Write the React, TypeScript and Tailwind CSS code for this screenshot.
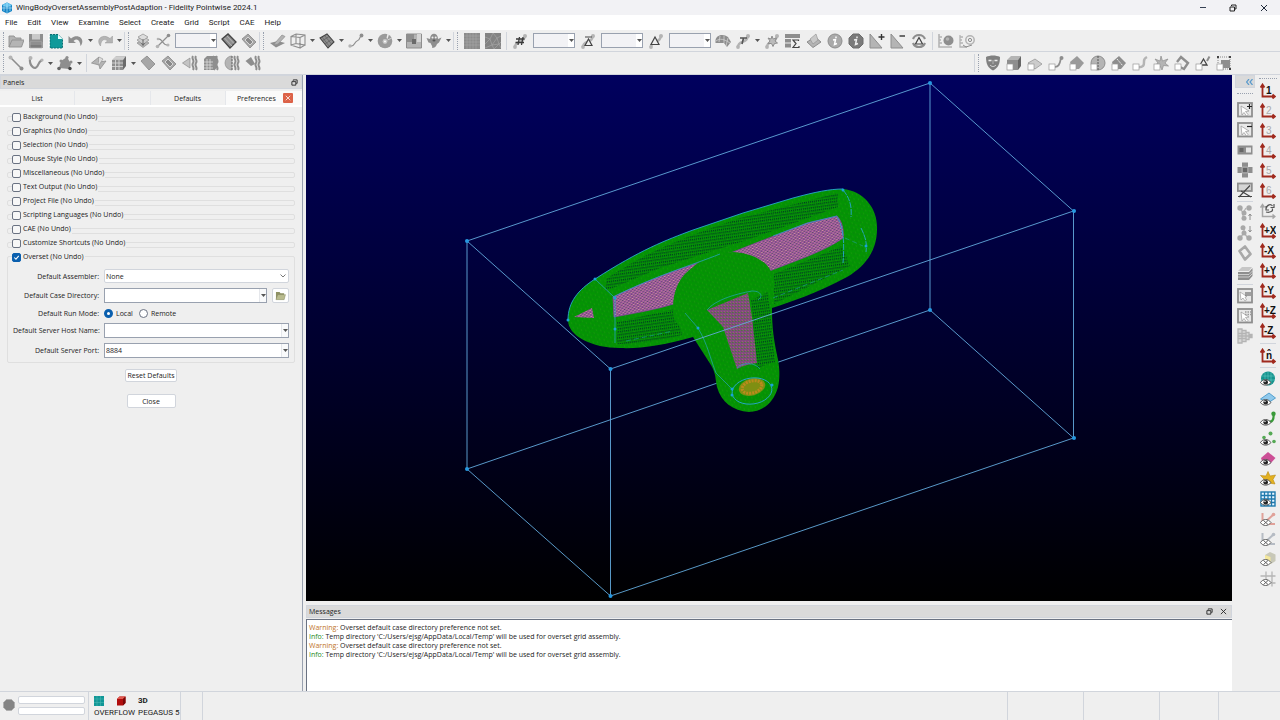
import React from 'react';

type IconName = string;

const G1 = '#8e8e8e';
const G2 = '#b4b4b4';
const G3 = '#6a6a6a';

const tag = <rect x="1" y="9" width="6" height="6" fill="#fff" stroke="#999" strokeWidth="0.7" />;

const curve = (
  <>
    <path d="M3 14C3 7 12 11 13 3" fill="none" stroke={G2} strokeWidth="2.4" />
    <circle cx="3" cy="14" r="1.9" fill={G2} />
    <circle cx="13" cy="3" r="2" fill={G2} />
  </>
);

const diamond = (
  <path d="M1 6L7 1L15 9L9 15Z" fill="#a6a6a6" stroke={G1} strokeWidth="0.9" />
);

const waves = (
  <path d="M11 1C9 4 13 5 11 8C9 11 13 12 11 15M14 1C12 4 16 5 14 8C12 11 16 12 14 15" fill="none" stroke={G1} strokeWidth="2" />
);

const axes = (
  <path d="M2.500 2.500V13.500H14M0.500 4.500L2.500 1.500L4.500 4.500M12.500 11.500L14.800 13.500L12.500 15.500" fill="none" stroke="#a02a1e" strokeWidth="1.8" />
);

const eye = (
  <>
    <path d="M0.500 11.500C3 7.500 8 7.500 11 11.500C8 15 3 15 0.500 11.500Z" fill="#fff" stroke="#444" strokeWidth="0.9" />
    <circle cx="5.700" cy="11.300" r="2.300" fill="#222" />
    <circle cx="5" cy="10.500" r="0.700" fill="#fff" />
  </>
);

const hiddenEye = (
  <>
    <path d="M0.500 11.500C3 7.500 8 7.500 11 11.500C8 15.500 3 15.500 0.500 11.500Z" fill="#fff" stroke="#555" strokeWidth="0.9" />
    <path d="M3.500 9.500L8 13.500M8 9.500L3.500 13.500" stroke="#555" strokeWidth="0.9" />
  </>
);

const screen = <rect x="1" y="1" width="14" height="13.500" fill="#e8e8e8" stroke={G1} strokeWidth="1.8" />;
const pointer = <path d="M4 4L5 13L7 10.500L9.500 14L11 12.500L8.500 9.500L12 9Z" fill="#fff" stroke="#888" strokeWidth="0.6" />;

const icons: Record<IconName, React.ReactNode> = {
  open: (
    <path d="M1 14V3H6L7.500 5H13V7H16L13.500 14ZM1 14L4 7H13" fill={G2} stroke={G1} strokeWidth="0.9" />
  ),
  save: (
    <>
      <path d="M1 1H15V15H1Z" fill={G1} />
      <rect x="4" y="1" width="8" height="5.500" fill="#c9c9c9" />
      <path d="M2 9H14V15H2ZM2 11H14" fill={G3} fillOpacity="0.5" stroke="#b5b5b5" strokeWidth="0.7" />
    </>
  ),
  importGrid: (
    <>
      <path d="M2 1.500H10L14.500 6V15H2Z" fill="#109a9a" stroke="#0b6f73" strokeDasharray="2 1" />
      <path d="M10 1.500V6H14.500Z" fill="#e8ffff" />
      <path d="M1 0V15" stroke="#fff" />
    </>
  ),
  undo: <path d="M0.500 3V10H8L5.500 8C9 5 12 7 12.500 13C18 6 10 0 3 5.500Z" fill={G1} />,
  redo: <path d="M15.500 3V10H8L10.500 8C7 5 4 7 3.500 13C-2 6 6 0 13 5.500Z" fill={G2} stroke={G1} strokeWidth="0.4" />,
  layers: (
    <>
      <path d="M2 10L8 6L14 10L8 14.500Z" fill={G2} stroke={G1} strokeWidth="0.7" />
      <path d="M2 7L8 3L14 7L8 11.500Z" fill="#ccc" stroke={G1} strokeWidth="0.7" />
      <path d="M3 4L8 1L13 4L8 7.500Z" fill="#ddd" stroke={G1} strokeWidth="0.7" />
      <path d="M8 6V12M6.500 10L8 12.500L9.500 10" stroke={G3} fill="none" />
    </>
  ),
  spline: (
    <>
      <path d="M2 14L14 2M3 6C8 5 7 13 13 12" fill="none" stroke={G1} strokeWidth="1.2" />
      <circle cx="2.500" cy="13.500" r="1.800" fill={G2} />
      <circle cx="13.500" cy="2.500" r="1.800" fill={G1} />
      <circle cx="13" cy="12" r="1.500" fill={G2} />
      <circle cx="3" cy="6" r="1.300" fill={G2} />
    </>
  ),
  domain: (
    <>
      <path d="M1 6L7 1L15 9L9 15Z" fill={G1} stroke="#444" strokeWidth="1.300" />
      <path d="M3.500 5L11 13M6 3L13 10.500" stroke={G2} />
    </>
  ),
  domainLight: diamond,
  domainPair: (
    <>
      {diamond}
      <path d="M7 4L12 9L9 12L4 7Z" fill="#8a8a8a" stroke="#ddd" strokeWidth="0.9" />
    </>
  ),
  pencil: (
    <>
      <path d="M0 10L8 8L15 10L6 14.500Z" fill={G1} />
      <path d="M5 10L12 2L15 3.500L8 11L4.500 12Z" fill={G2} stroke={G1} strokeWidth="0.7" />
    </>
  ),
  wireCube: (
    <path d="M1 3.500L10 4.500V15L1 12ZM6 1L15 2V12L6 10.500ZM1 3.500L6 1M10 4.500L15 2M10 15L15 12M1 12L6 10.500" fill="none" stroke={G1} strokeWidth="1.100" />
  ),
  mesh: (
    <>
      <path d="M1 5L8 1L15 9L9 15Z" fill={G1} stroke="#444" strokeWidth="1.100" />
      <path d="M3 4L10.500 13.500M5.500 2.500L12.500 11M3 8L10 3.500M6 11L12.500 6.500" stroke="#555" strokeWidth="0.600" />
    </>
  ),
  connector: (
    <>
      <path d="M2 13C7 14 6 9 9 8C13 7 11 3 14 2" fill="none" stroke={G1} strokeWidth="1.200" />
      <circle cx="2" cy="13" r="1.700" fill={G2} />
      <circle cx="13.500" cy="2.500" r="1.900" fill={G1} />
    </>
  ),
  disc: (
    <>
      <circle cx="8" cy="8" r="7.300" fill="#9b9b9b" />
      <path d="M9.500 5L10.500 0.500L12 1.500L10.500 6Z" fill="#efefef" />
      <path d="M10.500 7L15 5" stroke="#d5d5d5" />
      <circle cx="8" cy="8.500" r="2.400" fill="#c8c8c8" />
      <circle cx="8" cy="8.500" r="0.900" fill="#fff" />
    </>
  ),
  blocks: (
    <>
      <path d="M0.500 1H15.500V15H0.500Z" fill={G2} stroke={G1} />
      <path d="M1 1H8V9H1Z" fill={G1} />
      <path d="M6 6H10V11H6Z" fill={G3} />
      <path d="M11 1H15V9H11Z" fill="#d5d5d5" />
    </>
  ),
  ghost: (
    <>
      <path d="M4 6C4 -1 12 -1 12 6L15.500 4.500L13 9.500L11 11C10 14 8 15 6 15C7 13 5 12 4.500 10L2.500 9.500L0.500 5Z" fill={G1} />
      <circle cx="6.500" cy="4.500" r="1" fill="#eee" />
      <circle cx="9.700" cy="4.500" r="1" fill="#eee" />
      <ellipse cx="8" cy="7.500" rx="1.500" ry="1" fill="#555" />
    </>
  ),
  gridStruct: (
    <>
      <rect x="0" y="0" width="16" height="16" fill="#8c8c8c" />
      <path d="M0 3H16M0 6H16M0 9H16M0 12H16M3 0V16M6 0V16M9 0V16M12 0V16" stroke="#a9a9a9" strokeWidth="0.600" />
    </>
  ),
  gridTri: (
    <>
      <rect x="0" y="0" width="16" height="16" fill="#838383" />
      <path d="M0 4L5 6L8 0L12 5L16 3M0 11L5 6L7 12L12 5L14 11L16 9M0 15L7 12L9 16L14 11L16 15M7 12L14 11" fill="none" stroke="#a5a5a5" strokeWidth="0.700" />
    </>
  ),
  dimension: (
    <>
      {curve}
      <path d="M4 6H12.500M3.500 9.500H12M7.500 4L6 12M11 4L9.500 12" stroke="#3a3a3a" strokeWidth="1.300" />
    </>
  ),
  spacingAvg: (
    <>
      {curve}
      <path d="M5 4H12M8.500 6L12 12.500H5Z" fill="#eee" stroke="#444" strokeWidth="1.200" />
    </>
  ),
  spacing: (
    <>
      {curve}
      <path d="M7 4L11 11.500H3Z" fill="#eee" stroke="#444" strokeWidth="1.200" />
    </>
  ),
  shell: (
    <>
      <path d="M0.500 7C2 1 9 1 13 4L16 9L12 14L9 10L0.500 10Z" fill={G1} />
      <path d="M1 8C5 5 9 6 15 10M5 3L4 9M9 3L9 10M13 5L11 13" fill="none" stroke="#d0d0d0" strokeWidth="0.800" />
    </>
  ),
  distribute: (
    <>
      {curve}
      <path d="M5 5H12M8.500 5L7 11" stroke="#555" strokeWidth="1.600" />
    </>
  ),
  sparkCurve: (
    <>
      {curve}
      <path d="M8 3L9.200 6L12.500 5L11 8L13.500 10L10.500 10.500L9 13.500L7.500 10.500L4 10.500L6 8L4 5L7 6Z" fill="#bbb" stroke={G1} />
    </>
  ),
  sumTable: (
    <>
      <path d="M0 1H15V5H0ZM0 6H6V9.500H0ZM0 10.500H6V14.500H0Z" fill={G1} />
      <path d="M13.500 8V7H8L11 10.500L8 14.500H14V13" fill="none" stroke="#444" strokeWidth="1.200" />
    </>
  ),
  sheets: (
    <>
      <path d="M1 9L9 4L15 9L7 14.500Z" fill={G2} stroke={G1} />
      <path d="M4 6L10 1L12 7L7 11Z" fill="#c9c9c9" stroke={G1} strokeWidth="0.600" />
    </>
  ),
  infoLight: (
    <>
      <circle cx="8" cy="8" r="7" fill="#aaa" stroke={G1} />
      <path d="M6 7L8.500 6.500L7.500 11.500L10 10.500M9 3.500V5" fill="none" stroke="#fff" strokeWidth="1.500" />
    </>
  ),
  infoDark: (
    <>
      <path d="M5 1H11L15 5V11L11 15H5L1 11V5Z" fill="#7a7a7a" stroke="#6d6d6d" />
      <path d="M6 7L8.500 6.500L7.500 11.500L10 10.500M9 3.500V5" fill="none" stroke="#eee" strokeWidth="1.500" />
    </>
  ),
  trianglePlus: (
    <>
      <path d="M1 1L13 15H1Z" fill={G2} stroke={G1} />
      <path d="M9.500 4H15.500M12.500 1V7" stroke="#333" strokeWidth="1.400" />
    </>
  ),
  triangleMinus: (
    <>
      <path d="M1 1L13 15H1Z" fill={G2} stroke={G1} />
      <path d="M9.500 3H15" stroke="#333" strokeWidth="1.400" />
    </>
  ),
  recalc: (
    <>
      <path d="M2 6A6.500 6.500 0 0 1 14 6M14 10A6.500 6.500 0 0 1 2 10" fill="none" stroke={G1} strokeWidth="2.200" />
      <path d="M8 4.500L11.500 11H4.500Z" fill="#eee" stroke="#444" strokeWidth="1.200" />
    </>
  ),
  rulerBall: (
    <>
      <path d="M1 1V14H14M1 4H4M1 7H3M1 10H4" fill="none" stroke={G2} strokeWidth="1.600" />
      <circle cx="10.500" cy="7.500" r="5" fill={G1} />
      <circle cx="9.500" cy="6" r="1.800" fill={G2} />
    </>
  ),
  rulerRoll: (
    <>
      <path d="M1 2V14H8M1 4H4M1 7H3M1 10H4" fill="none" stroke={G2} strokeWidth="1.300" />
      <circle cx="11" cy="7" r="4.200" fill="none" stroke={G2} strokeWidth="1.500" />
      <circle cx="11" cy="7" r="1.600" fill="none" stroke={G1} />
      <path d="M4 12L7 14L13 12" fill="none" stroke={G1} />
    </>
  ),
  line: (
    <>
      <path d="M2.500 2.500L14 14" stroke={G1} strokeWidth="1.600" />
      <circle cx="2.500" cy="2.500" r="2" fill={G2} />
      <circle cx="13.500" cy="13.500" r="2" fill={G1} />
    </>
  ),
  arc: (
    <>
      <path d="M2 3C1 12 8 16 10 10C11 7 12 6 14 5" fill="none" stroke={G1} strokeWidth="2.200" />
      <circle cx="2.500" cy="3" r="2" fill={G2} />
      <circle cx="14" cy="5" r="1.600" fill={G2} />
    </>
  ),
  polygon: (
    <>
      <path d="M2 13L4 6L10 2L14 9L12 14Z" fill={G1} />
      <circle cx="2" cy="13.500" r="1.800" fill="#666" />
      <circle cx="4" cy="6" r="1.500" fill={G1} />
      <circle cx="10" cy="2.500" r="1.600" fill={G1} />
      <circle cx="13" cy="13.500" r="1.700" fill="#444" />
      <circle cx="14" cy="7" r="1.500" fill={G1} />
    </>
  ),
  foldSheets: (
    <>
      <path d="M0.500 8L8 2V7L15 6L9 14L8 10Z" fill={G2} stroke={G1} strokeWidth="0.800" />
      <path d="M8 2L12 4L8 10" fill="#ddd" stroke={G1} strokeWidth="0.600" />
    </>
  ),
  gridCube: (
    <>
      <path d="M1 5L5 1H15L12 5Z" fill="#c4c4c4" />
      <path d="M12 5L15 1V11L12 15Z" fill={G3} />
      <path d="M1 5H12V15H1Z" fill={G1} />
      <path d="M1 8H12M1 11.500H12M4.500 5V15M8 5V15M3 3H13" stroke="#ddd" strokeWidth="0.800" />
    </>
  ),
  prism: (
    <>
      <path d="M0.500 8L8 3V13Z" fill="#c4c4c4" stroke={G1} strokeWidth="0.700" />
      {waves}
    </>
  ),
  gridWaves: (
    <>
      <path d="M1 4L4 1H14V13L11 15H1Z" fill={G1} />
      <path d="M1 7H10M1 10H10M1 13H10M4 4V15M7 4V15" stroke="#ddd" strokeWidth="0.800" />
      {waves}
    </>
  ),
  globeWaves: (
    <>
      <path d="M8 1A7 7 0 0 0 8 15Z" fill={G2} stroke={G1} strokeWidth="0.700" />
      <path d="M8 1V15" stroke={G3} strokeDasharray="2 1" />
      {waves}
    </>
  ),
  domainWaves: (
    <>
      <path d="M0.500 6L6 2L10 9L6 11Z" fill={G1} />
      {waves}
    </>
  ),
  mask: (
    <>
      <path d="M1 2C5 0 11 0 15 2C15 9 13 13 8 15.500C3 13 1 9 1 2Z" fill="#808080" />
      <path d="M3.500 5.500H6.500M9.500 5.500H12.500" stroke="#eee" strokeWidth="1.400" />
      <path d="M5 10C7 12 9 12 11 10" fill="none" stroke="#ddd" />
      <path d="M8 5V9" stroke={G2} />
    </>
  ),
  tCube: (
    <>
      <path d="M1 5L5 1H15L12 5Z" fill={G2} />
      <path d="M12 5L15 1V11L12 15Z" fill="#666" />
      <path d="M1 5H12V15H1Z" fill={G1} />
      {tag}
    </>
  ),
  tSheet: (
    <>
      <path d="M1 8L8 4L15 9L8 14Z" fill="#ccc" stroke={G1} strokeWidth="0.700" />
      {tag}
    </>
  ),
  tCurve: (
    <>
      <path d="M4 11C11 14 12 8 13 3" fill="none" stroke={G1} strokeWidth="1.800" />
      <circle cx="13.500" cy="3" r="2" fill={G1} />
      {tag}
    </>
  ),
  tDiamond: (
    <>
      <path d="M1 7L8 1L15 8L10 14H3Z" fill="#9a9a9a" />
      {tag}
    </>
  ),
  tGlobe: (
    <>
      <circle cx="8" cy="8" r="7" fill={G2} stroke={G1} />
      <path d="M8 1V15" stroke="#555" strokeDasharray="2 1" />
      {tag}
    </>
  ),
  tDomain: (
    <>
      <path d="M1 7L8 1L15 8L10 14H3Z" fill={G1} />
      <path d="M6 4L12 11" stroke="#eee" strokeDasharray="2 1" />
      {tag}
    </>
  ),
  tArc: (
    <>
      <path d="M4 12C13 13 12 9 12 6C12 4 13 3 15 2" fill="none" stroke={G2} strokeWidth="2.500" />
      {tag}
    </>
  ),
  tSpark: (
    <>
      <path d="M8 1L9.500 6L15 4L12 8L15.500 11L10.500 10.500L9 15L7 11L1 11L5 8L2 4L7 6Z" fill={G2} stroke={G1} strokeWidth="0.700" />
      {tag}
    </>
  ),
  tLoop: (
    <>
      <path d="M3 7L7 2L14 8L10 14L6 12" fill="none" stroke={G1} strokeWidth="2.400" />
      {tag}
    </>
  ),
  tSpacing: (
    <>
      <path d="M8.500 4L12 10H5Z" fill="none" stroke="#444" strokeWidth="1.300" />
      <path d="M12 6L14.500 1.500" stroke={G1} strokeWidth="2" />
      {tag}
    </>
  ),
  tSelect: (
    <>
      <path d="M2 2H14V14H2Z" fill="none" stroke="#888" strokeDasharray="1 1" />
      <path d="M1 1H3V3H1ZM13 1H15V3H13ZM13 13H15V15H13Z" fill="#444" />
      <rect x="5" y="5" width="9" height="8" fill={G1} />
      {tag}
    </>
  ),
  selPlus: (
    <>
      {screen}
      {pointer}
      <path d="M10 4.500H15M12.500 2V7" stroke="#222" strokeWidth="1.200" />
    </>
  ),
  selMinus: (
    <>
      {screen}
      {pointer}
      <path d="M10 4.500H15" stroke="#222" strokeWidth="1.200" />
    </>
  ),
  pair: (
    <>
      <rect x="0.500" y="3.500" width="15" height="9" fill={G1} />
      <rect x="2.500" y="6" width="4" height="4" fill="#666" />
      <rect x="9" y="5.500" width="5" height="5" fill="#e5e5e5" />
    </>
  ),
  cross: (
    <>
      <path d="M5 0.500H11V5H15.500V11H11V15.500H5V11H0.500V5H5Z" fill={G1} />
      <path d="M6 6H10V10H6Z" fill="#666" />
      <path d="M5 5H11V11H5Z" fill="none" stroke="#c0c0c0" strokeWidth="0.700" />
    </>
  ),
  cutAngle: (
    <>
      <rect x="0.800" y="1.500" width="14" height="7.500" fill="#d5d5d5" stroke={G1} strokeWidth="1.800" />
      <path d="M2 15L13 3.500M4 9L14 15M1 14.500H15" stroke="#444" strokeWidth="1.100" />
    </>
  ),
  treeUp: (
    <>
      <path d="M3 3L6 8L9 3M6 8V13" fill="none" stroke={G2} strokeWidth="1.300" />
      <g fill="#a8a8a8"><circle cx="3" cy="3" r="2.700" /><circle cx="12" cy="3" r="2.700" /><circle cx="7" cy="8" r="2.500" /><circle cx="7" cy="13.300" r="2.500" /></g>
      <path d="M13 15V9M11.500 11L13 9L14.500 11" fill="none" stroke={G1} />
    </>
  ),
  treeDown: (
    <>
      <path d="M7 3L7 8L3 13M7 8L11 13" fill="none" stroke={G2} strokeWidth="1.300" />
      <g fill="#a8a8a8"><circle cx="6" cy="2.700" r="2.500" /><circle cx="7" cy="8" r="2.500" /><circle cx="3" cy="13" r="2.700" /><circle cx="12" cy="13" r="2.700" /></g>
      <path d="M13 1V7M11.500 5L13 7L14.500 5" fill="none" stroke={G1} />
    </>
  ),
  loop: <path d="M2.500 6L8 1.500L13.500 9L8 14.500Z" fill="none" stroke="#a8a8a8" strokeWidth="2.600" strokeLinejoin="round" />,
  stack: (
    <>
      <path d="M1 6L5 2H15L12 6Z" fill="#c6c6c6" />
      <path d="M1 7H12V15H1ZM12 7L15.500 3V11L12 15Z" fill={G1} />
      <path d="M1 9.500H12L15.500 6M1 12H12L15.500 8.500" fill="none" stroke="#ddd" strokeWidth="0.800" />
    </>
  ),
  listA: (
    <>
      {screen}
      <path d="M3 4L4 12L6 10L8 13L9.500 12L8 9L10 8.500Z" fill="#fff" stroke={G1} strokeWidth="0.600" />
      <path d="M8 5H14M8 7H14" stroke="#555" strokeWidth="1" />
    </>
  ),
  listB: (
    <>
      {screen}
      {pointer}
      <path d="M8 4H15M8 6.500H15" stroke="#999" strokeWidth="1.500" strokeDasharray="1.500 1" />
    </>
  ),
  fan: (
    <path d="M1 1H5V15H1ZM5 2.500H9V13.500H5M9 4.500H12V11.500H9M12 6.500H15V9.500H12M1 5.500H9M1 8H15M1 10.500H9" fill="#d8d8d8" stroke={G2} strokeWidth="1.300" />
  ),
  reset: (
    <>
      <path d="M2.500 2V13.500H14M0.500 4.500L2.500 1.500L4.500 4.500M12.500 11.500L14.800 13.500L12.500 15.500" fill="none" stroke="#a5a5a5" strokeWidth="1.500" />
      <path d="M6 6C7 1 11 1 12.500 3M6 9C10 10 14 8 12 5.500M10.500 4.500H14V1M6 3V7H9" fill="none" stroke="#555" strokeWidth="1.200" />
    </>
  ),
  showBlocks: (
    <>
      <circle cx="8" cy="7.500" r="7" fill="#16948e" />
      <path d="M1.500 5H14.500M1 9H15M5 1.500V13M8 0.500V14M11 1.500V13" stroke="#6fd0c8" strokeWidth="0.500" />
      {eye}
    </>
  ),
  showDomains: (
    <>
      <path d="M0.500 8L9 2L15.500 7L8 12Z" fill="#8fc9ec" stroke="#4a9aca" strokeWidth="0.900" />
      {eye}
    </>
  ),
  showConnectors: (
    <>
      <path d="M6 11C13 12 14 8 13.500 3" fill="none" stroke="#3a9a3a" strokeWidth="2.200" />
      <circle cx="13.500" cy="2.800" r="2.200" fill="#3a9a3a" />
      {eye}
    </>
  ),
  showPoints: (
    <>
      <g fill="#55a955"><circle cx="10.500" cy="2.500" r="2" /><circle cx="4" cy="6.500" r="1.800" /><circle cx="14" cy="10.500" r="1.800" /></g>
      {eye}
    </>
  ),
  showDatabase: (
    <>
      <path d="M1 7L8 1L15.500 7L10 13H3Z" fill="#cc4f96" />
      {eye}
    </>
  ),
  showSources: (
    <>
      <path d="M8 0.500L10 5L15.500 4L13 8.500L15 13L9 12L2 12L4 8L0.500 4.500L6 5Z" fill="#e3b120" stroke="#b98a12" strokeWidth="0.600" />
      {eye}
    </>
  ),
  showGrid: (
    <>
      <rect x="1" y="1" width="14" height="14" fill="#e8f5ff" stroke="#1f79ad" strokeWidth="1.400" />
      <path d="M1 4.500H15M1 8H15M1 11.500H15M4.500 1V15M8 1V15M11.500 1V15" stroke="#1f79ad" strokeWidth="1.300" />
      {eye}
    </>
  ),
  hideAxesRed: (
    <>
      <path d="M2.500 13V2M4 12L13 4M4 13H15" fill="none" stroke="#e0a29a" strokeWidth="2" />
      <circle cx="13.500" cy="3.500" r="1.800" fill="#e0a29a" />
      {hiddenEye}
    </>
  ),
  hideAxes: (
    <>
      <path d="M2.500 13V2M4 12L13 4M4 13H15" fill="none" stroke="#b6bcc4" strokeWidth="2" />
      <circle cx="13.500" cy="3.500" r="1.800" fill="#b6bcc4" />
      {hiddenEye}
    </>
  ),
  hideCube: (
    <>
      <path d="M5 4L10 1L15.500 3.500V10L11 13L5 10Z" fill="#c8c8b8" />
      <path d="M5 4L10.500 6V13L5 10Z" fill="#f3e79c" />
      {hiddenEye}
    </>
  ),
  hideGrid: (
    <>
      <path d="M0.500 5H15.500M5 12H15.500M6 0.500V9M12 0.500V15.500" stroke="#b5b5b5" strokeWidth="1.300" />
      {hiddenEye}
    </>
  ),
};

const Icon: React.FC<{ name: IconName; className?: string }> = ({ name, className = 'h-4 w-4' }) => (
  <svg viewBox="0 0 16 16" className={className} aria-hidden="true">
    {icons[name]}
  </svg>
);

const ToolButton: React.FC<{ name: IconName }> = ({ name }) => (
  <button type="button" aria-label={name} className="flex h-5 w-5 shrink-0 items-center justify-center">
    <Icon name={name} />
  </button>
);

const MenuArrow = () => (
  <button type="button" aria-label="More" className="flex h-3 w-[9px] shrink-0 items-center justify-center">
    <svg viewBox="0 0 5 3" className="h-[3px] w-[5px]"><path d="M0 0H5L2.500 3Z" fill="#555" /></svg>
  </button>
);

const Handle = () => (
  <div className="flex w-[9px] shrink-0 items-center border-l border-gray-300 pl-[3px]">
    <div className="h-[18px] border-l border-dotted border-gray-400" />
  </div>
);

const Separator = () => <div className="mx-0.5 h-[18px] w-px shrink-0 bg-gray-300" />;

const SmallCombo: React.FC<{ label: string }> = ({ label }) => (
  <div className="mx-0.5 flex h-[15px] w-[42px] shrink-0 items-center border border-gray-400 bg-[#f2f2f5]">
    <input aria-label={label} className="h-full min-w-0 flex-1 bg-transparent text-[7px] outline-none" />
    <div className="flex h-full w-[6px] items-center justify-center bg-white"><MenuArrow /></div>
  </div>
);

// '|' is a group handle, '/' a separator, 'v' a drop-down arrow and '[]' a value box
const fileTools = [
  'open', 'save', 'importGrid', 'undo', 'v', 'redo', 'v', '|',
  'layers', 'spline', '[]', 'domain', 'domainPair', '|',
  'pencil', 'wireCube', 'v', 'mesh', 'v', 'connector', 'v', 'disc', 'v', 'blocks', 'ghost', 'v', '|',
];
const gridTools = ['gridStruct', 'gridTri', '/', 'dimension', '[]', 'spacingAvg', '[]', 'spacing', '[]'];
const shapeTools = ['shell', 'distribute', 'v'];
const examineTools = [
  'sparkCurve', 'sumTable', 'sheets', 'infoLight', 'infoDark',
  'trianglePlus', 'triangleMinus', 'recalc', '/', 'rulerBall', 'rulerRoll',
];

const createTools = [
  'line', 'arc', 'v', 'polygon', 'v', '/', 'foldSheets', 'gridCube', 'v',
];
const solveTools = ['domainLight', 'domainPair', 'prism', 'gridWaves', 'globeWaves', 'domainWaves'];

const maskTools = [
  'mask', 'tCube', 'tSheet', 'tCurve', 'tDiamond', 'tGlobe', 'tDomain', 'tArc', 'tSpark', 'tLoop', 'tSpacing', 'tSelect',
];

const Tools: React.FC<{ items: string[]; spaced?: boolean }> = ({ items, spaced }) => (
  <div className={`flex items-center ${spaced ? 'gap-px' : ''}`}>
    {items.map((item, i) => {
      if (item === '|') return <Handle key={i} />;
      if (item === '/') return <Separator key={i} />;
      if (item === 'v') return <MenuArrow key={i} />;
      if (item === '[]') return <SmallCombo key={i} label={`Value ${i}`} />;
      return <ToolButton key={i} name={item} />;
    })}
  </div>
);

const menus = ['File', 'Edit', 'View', 'Examine', 'Select', 'Create', 'Grid', 'Script', 'CAE', 'Help'];

const RestoreIcon = ({ className = 'h-2 w-2' }: { className?: string }) => (
  <svg viewBox="0 0 8 8" className={className}>
    <path d="M2.500 2V1H7V5H6M1 3H5.500V7H1Z" fill="none" stroke="#222" strokeWidth="1" />
  </svg>
);

const CloseIcon = ({ className = 'h-2 w-2' }: { className?: string }) => (
  <svg viewBox="0 0 8 8" className={className}>
    <path d="M1 1L7 7M7 1L1 7" stroke="currentColor" strokeWidth="1" />
  </svg>
);

const TitleBar = () => (
  <header className="flex h-[15px] items-center bg-[#f2f2f5] pl-px">
    <svg viewBox="0 0 12 12" className="h-3 w-3">
      <path d="M6 0.500L11 3V9L6 11.500L1 9V3Z" fill="#1583c5" />
      <path d="M6 0.500L11 3L6 5.500L1 3Z" fill="#66c4ef" />
      <path d="M3 3V9M6 1V11M9 3V9M1 6L11 6" stroke="#c5ecff" strokeWidth="0.600" />
    </svg>
    <h1 className="pl-[3px] font-[Roboto,sans-serif] text-[8px] text-[#222]">WingBodyOversetAssemblyPostAdaption - Fidelity Pointwise 2024.1</h1>
    <div className="ml-auto flex items-center text-gray-800">
      <button type="button" aria-label="Minimize" className="flex w-[30px] justify-center"><span className="h-px w-[6px] bg-gray-700" /></button>
      <button type="button" aria-label="Restore" className="flex w-[30px] justify-center"><RestoreIcon /></button>
      <button type="button" aria-label="Close" className="flex w-[32px] justify-center"><CloseIcon /></button>
    </div>
  </header>
);

const groups = [
  'Background', 'Graphics', 'Selection', 'Mouse Style', 'Miscellaneous',
  'Text Output', 'Project File', 'Scripting Languages', 'CAE', 'Customize Shortcuts',
];

const Check: React.FC<{ label: string; checked?: boolean }> = ({ label, checked }) => (
  <label className="flex items-center gap-0.5 bg-[#efefef] pr-px leading-[14px]">
    <span className="relative flex h-[9px] w-[9px]">
      <input
        type="checkbox"
        defaultChecked={checked}
        className="h-[9px] w-[9px] appearance-none rounded-[2px] border border-gray-500 bg-[#f7f7f7] checked:border-[#0a5fae] checked:bg-[#0a5fae]"
      />
      {checked && (
        <svg viewBox="0 0 8 8" className="pointer-events-none absolute inset-0 h-[9px] w-[9px]">
          <path d="M2 4L3.500 5.500L6 2.500" fill="none" stroke="#fff" strokeWidth="0.900" />
        </svg>
      )}
    </span>
    {label} (No Undo)
  </label>
);

const ComboField: React.FC<{ id: string; value?: string }> = ({ id, value = '' }) => (
  <div className="flex h-[15px] min-w-0 flex-1 items-center border border-gray-400 bg-white">
    <input id={id} defaultValue={value} className="h-full min-w-0 flex-1 bg-transparent px-px outline-none" />
    <div className="flex h-full w-[7px] items-center justify-center border-l border-gray-200 bg-gray-50"><MenuArrow /></div>
  </div>
);

const FormRow: React.FC<{ label: string; id: string; children: React.ReactNode }> = ({ label, id, children }) => (
  <div className="flex items-center">
    <label htmlFor={id} className="w-[91px] shrink-0 pr-[5px] text-right whitespace-nowrap">{label}</label>
    {children}
  </div>
);

const PanelsDock = () => (
  <aside className="flex w-[303px] shrink-0 flex-col border-r border-gray-400 bg-[#efefef] text-[7px] text-[#222]">
    <div className="flex h-[14px] items-center justify-between border border-gray-300 bg-[#dadada] pr-[3px] pl-0.5">
      <h2>Panels</h2>
      <button type="button" aria-label="Float panels"><RestoreIcon className="h-[7px] w-[7px]" /></button>
    </div>
    <div role="tablist" className="flex h-[18px] items-stretch border-b-2 border-white pt-0.5">
      {['List', 'Layers', 'Defaults'].map((tab) => (
        <button key={tab} type="button" role="tab" className="flex-1 border-r border-gray-200 bg-[#f2f2f2]">{tab}</button>
      ))}
      <div className="flex flex-1 items-center justify-center gap-[7px] bg-[#fafafa] pl-0.5">
        <button type="button" role="tab" aria-selected="true">Preferences</button>
        <button type="button" aria-label="Close tab" className="flex h-[10px] w-[10px] items-center justify-center rounded-[1px] bg-[#dc6248] text-white">
          <CloseIcon className="h-[6px] w-[6px]" />
        </button>
      </div>
    </div>
    <form className="px-[7px] pt-[3px]" onSubmit={(e) => e.preventDefault()}>
      {groups.map((group) => (
        <fieldset key={group} className="relative flex h-[14px] items-center pl-[5px]">
          <div className="absolute inset-x-0 top-[6px] h-[6px] rounded-[2px] border border-[#dfdfdf]" />
          <div className="relative"><Check label={group} /></div>
        </fieldset>
      ))}
      <fieldset className="relative pl-[5px]">
        <div className="absolute inset-x-0 top-[6px] bottom-0 rounded-[2px] border border-[#dfdfdf]" />
        <div className="relative">
          <div className="flex"><Check label="Overset" checked /></div>
          <div className="flex flex-col gap-[5px] pt-[5px] pr-[6px] pb-[5px] pl-px">
            <FormRow label="Default Assembler:" id="assembler">
              <div className="relative flex min-w-0 flex-1">
                <select id="assembler" className="h-[14px] w-full appearance-none rounded-[2px] border border-gray-300 bg-white px-px">
                  <option>None</option>
                </select>
                <svg viewBox="0 0 6 4" className="pointer-events-none absolute top-[5px] right-[3px] h-1 w-[6px]">
                  <path d="M0.500 0.500L3 3L5.500 0.500" fill="none" stroke="#555" strokeWidth="0.800" />
                </svg>
              </div>
            </FormRow>
            <FormRow label="Default Case Directory:" id="case-dir">
              <ComboField id="case-dir" />
              <button type="button" aria-label="Browse" className="ml-[5px] flex h-[15px] w-[17px] items-center justify-center rounded-[2px] border border-gray-300 bg-white">
                <svg viewBox="0 0 12 11" className="h-[10px] w-[11px]">
                  <path d="M1 1H5L6 2.500H10V9H1Z" fill="#8e9163" />
                  <path d="M1 9.500L3 4H11.500L10 9.500Z" fill="#b9bb8e" stroke="#8a8c66" strokeWidth="0.500" />
                </svg>
              </button>
            </FormRow>
            <FormRow label="Default Run Mode:" id="local">
              <div className="flex h-[10px] items-center">
                <input id="local" type="radio" name="mode" defaultChecked className="h-[9px] w-[9px] appearance-none rounded-full border border-gray-500 bg-white checked:border-[3px] checked:border-[#0a5fae]" />
                <label htmlFor="local" className="pr-[6px] pl-[3px]">Local</label>
                <input id="remote" type="radio" name="mode" className="h-[9px] w-[9px] appearance-none rounded-full border border-gray-500 bg-white" />
                <label htmlFor="remote" className="pl-[3px]">Remote</label>
              </div>
            </FormRow>
            <FormRow label="Default Server Host Name:" id="host"><ComboField id="host" /></FormRow>
            <FormRow label="Default Server Port:" id="port"><ComboField id="port" value="8884" /></FormRow>
          </div>
        </div>
      </fieldset>
      <div className="flex flex-col items-center gap-3 pt-[6px]">
        <button type="button" className="h-[13px] w-[52px] rounded-[2px] border border-gray-300 bg-white whitespace-nowrap">Reset Defaults</button>
        <button type="button" className="h-[14px] w-[49px] rounded-[2px] border border-gray-300 bg-white">Close</button>
      </div>
    </form>
  </aside>
);

const nodes = [[467, 241], [930, 83], [1074, 211], [610.5, 369], [467, 469], [930, 310], [1074, 438], [610.5, 596]];
const meshNodes = [[595, 279], [568, 320], [615, 298], [615, 329], [843, 190], [866, 246], [698, 328], [732, 389], [732, 395], [772, 385]];

const hull = 'M568 320C568 302 578 290 595 279C640 250 666 240 693 230L743 213L793 198C815 192 830 189 843 189C864 191 878 209 877 229C877 250 866 266 847 277C815 294 790 302 772 308L693 337C665 345 640 349 620 348C592 348 568 336 568 320Z';
const wing = 'M673 313C672 290 680 276 693 267C705 256 719 253 733 252C753 253 771 263 772 276V310C772 328 774 340 777 355C780 367 780 378 778 387C774 402 764 411 749 412C733 411 721 402 717 387C715 377 716 372 709 362L693 337C686 328 675 328 673 313Z';
const hullSurface = 'M613 297C660 274 700 262 733 252L807 223L837 216C842 221 844 230 843 238C825 251 795 261 772 270L680 302C655 310 635 313 614 317Z';
const wingSurface = 'M707 310L748 293L752 317L757 363C750 364 742 366 737 369L723 327Z';

const Viewport = () => (
  <svg viewBox="306 75 926 526" preserveAspectRatio="none" className="block min-h-0 w-full flex-1" role="img" aria-label="Overset grid view">
    <defs>
      <linearGradient id="sky" x1="0" y1="0" x2="0" y2="1">
        <stop offset="0" stopColor="#00005e" />
        <stop offset="0.500" stopColor="#00002f" />
        <stop offset="1" stopColor="#000" />
      </linearGradient>
      <pattern id="greenMesh" width="7" height="5" patternUnits="userSpaceOnUse" patternTransform="rotate(-20)">
        <rect width="7" height="5" fill="#049404" />
        <path d="M1 1H2M4 3H5" stroke="#0d7d12" />
        <path d="M3 1H4M6 4H7" stroke="#1f9a10" />
      </pattern>
      <pattern id="openMesh" width="2" height="3" patternUnits="userSpaceOnUse" patternTransform="rotate(-8)">
        <rect width="1.100" height="1.500" fill="#00202a" fillOpacity="0.750" />
      </pattern>
      <pattern id="pinkMesh" width="4" height="3" patternUnits="userSpaceOnUse" patternTransform="rotate(-12)">
        <rect width="4" height="3" fill="#97509c" />
        <path d="M0 0.500H1.300M2 2H3.200" stroke="#d99a9c" />
        <path d="M2 0.500H3M0 2H1" stroke="#4a4660" />
      </pattern>
      <pattern id="purpleMesh" width="3" height="3" patternUnits="userSpaceOnUse">
        <rect width="3" height="3" fill="#824a80" />
        <path d="M0 0.500H1.500" stroke="#4e7a3a" />
        <path d="M1 2.500H2" stroke="#9a6474" />
      </pattern>
    </defs>
    <rect x="306" y="75" width="926" height="526" fill="url(#sky)" />
    <g fill="none" stroke="#62a9dc" strokeWidth="0.900">
      <path d="M467 241L930 83L1073.500 211V438L610.500 596L467 469ZM467 241L610.500 369V596M930 83V310L1073.500 438M930 310L467 469" />
    </g>
    <path d={hull} fill="url(#greenMesh)" />
    <path d="M606 279C650 250 680 239 740 218L838 193V207L750 239L660 268L606 291Z" fill="url(#openMesh)" />
    <path d="M617 322L675 309L682 335C660 341 640 344 617 344Z" fill="url(#openMesh)" />
    <path d="M774 274L842 246L850 266L774 304Z" fill="url(#openMesh)" />
    <path d={hullSurface} fill="url(#pinkMesh)" stroke="#8f3fa8" strokeOpacity="0.700" />
    <path d="M574 317L592 308L594 318Z" fill="url(#pinkMesh)" />
    <path d={wing} fill="url(#greenMesh)" />
    <path d="M751 300L768 292L775 362L757 368Z" fill="url(#openMesh)" />
    <path d={wingSurface} fill="url(#purpleMesh)" />
    <ellipse cx="752" cy="387" rx="13.500" ry="8.500" transform="rotate(-15 752 387)" fill="#7f8f12" />
    <ellipse cx="752" cy="387" rx="10" ry="6" transform="rotate(-15 752 387)" fill="none" stroke="#bd8a1c" strokeWidth="3" strokeDasharray="2 1" />
    <g fill="none" stroke="#27a6cf" strokeWidth="0.900">
      <path d="M568 320C568 302 578 290 595 279C640 250 666 240 693 230L743 213L793 198C815 192 830 189 843 189" />
      <path d="M595 279L615 298V343M613 297C660 274 690 266 720 254M773 236L808 223L837 216" strokeOpacity="0.800" />
      <path d="M843 190C850 198 852 207 851 217M837 217C845 229 844 250 843 263M861 228C866 238 867 244 866 252" strokeDasharray="6 1" />
      <path d="M773 298L843 270M626 341L673 331M845 238L863 246" strokeOpacity="0.500" strokeDasharray="5 3" />
      <path d="M707 310C715 300 735 294 752 291C762 291 763 297 758 300M685 313L698 328C708 345 710 358 716 373L732 389M737 368C742 362 755 362 760 369" strokeOpacity="0.700" />
      <ellipse cx="752" cy="391" rx="20" ry="13" transform="rotate(-8 752 391)" />
      <path d="M610.500 369L1073.500 211" stroke="#62a9dc" />
    </g>
    <g fill="#2698e0">
      {nodes.map(([x, y]) => <circle key={`${x}-${y}`} cx={x} cy={y} r="2" />)}
      {meshNodes.map(([x, y]) => <circle key={`${x}-${y}`} cx={x} cy={y} r="1.500" fill="#19a3d8" />)}
    </g>
  </svg>
);

const messages = [
  { kind: 'Warning', text: 'Overset default case directory preference not set.' },
  { kind: 'Info', text: "Temp directory 'C:/Users/ejsg/AppData/Local/Temp' will be used for overset grid assembly." },
  { kind: 'Warning', text: 'Overset default case directory preference not set.' },
  { kind: 'Info', text: "Temp directory 'C:/Users/ejsg/AppData/Local/Temp' will be used for overset grid assembly." },
];

const MessagesDock = () => (
  <section className="mt-1 flex h-[86px] shrink-0 flex-col text-[7px] text-[#222]">
    <div className="flex h-[13px] items-center border border-gray-300 bg-[#dadada] px-0.5">
      <h2 className="flex-1">Messages</h2>
      <button type="button" aria-label="Float messages" className="mr-[7px]"><RestoreIcon className="h-[7px] w-[7px]" /></button>
      <button type="button" aria-label="Close messages" className="mr-0.5"><CloseIcon className="h-[7px] w-[7px]" /></button>
    </div>
    <div className="mt-px flex-1 border-t border-l border-gray-500 bg-white px-0.5 pt-[3px] leading-[9px]">
      {messages.map((m, i) => (
        <p key={i}>
          <span className={m.kind === 'Warning' ? 'text-[#c07427]' : 'text-[#1d8a1d]'}>{m.kind}:</span> {m.text}
        </p>
      ))}
    </div>
  </section>
);

const SideButton: React.FC<{ name: IconName }> = ({ name }) => (
  <button type="button" aria-label={name} className="flex h-5 w-5 shrink-0 items-center justify-center">
    <Icon name={name} />
  </button>
);

const AxisButton: React.FC<{ label: string; muted?: boolean }> = ({ label, muted }) => (
  <button type="button" aria-label={`View ${label}`} className="flex h-5 w-5 shrink-0 items-center justify-center">
    <svg viewBox="0 0 16 16" className="h-4 w-4">
      {axes}
      <text
        x={/^[+-]/.test(label) ? 4 : 6}
        y="11"
        fontSize="10"
        fontWeight={muted ? 400 : 700}
        fontFamily="Liberation Sans, sans-serif"
        fill={muted ? '#aaa' : '#111'}
      >
        {label}
      </text>
    </svg>
  </button>
);

const DotRow = () => <div className="mt-[3px] mb-0.5 w-[18px] border-t border-dotted border-gray-400" />;
const SideRule = () => <div className="my-px h-px w-4 shrink-0 bg-gray-300" />;

const SideBars = () => (
  <div className="flex shrink-0 bg-[#efefef]">
    <div className="ml-[3px] flex w-5 flex-col items-center">
      <button type="button" aria-label="Collapse" className="flex h-[13px] w-5 items-center justify-end border border-gray-300 bg-[#dadada] pr-px">
        <svg viewBox="0 0 7 6" className="h-[6px] w-[7px]"><path d="M3 0L0.500 3L3 6M6.500 0L4 3L6.500 6" fill="none" stroke="#5a9acb" strokeWidth="1.200" /></svg>
      </button>
      <div className="mt-[5px] mb-[6px] w-4 border-t border-dotted border-gray-400" />
      {['selPlus', 'selMinus', 'pair', 'cross', 'cutAngle'].map((n) => <SideButton key={n} name={n} />)}
      <SideRule />
      {['treeUp', 'treeDown', 'loop', 'stack'].map((n) => <SideButton key={n} name={n} />)}
      <SideRule />
      {['listA', 'listB', 'fan'].map((n) => <SideButton key={n} name={n} />)}
    </div>
    <div className="flex w-[25px] flex-col items-center">
      <DotRow />
      {['1', '2', '3', '4', '5', '6'].map((n) => <AxisButton key={n} label={n} muted={n !== '1'} />)}
      <SideButton name="reset" />
      {['+X', '-X', '+Y', '-Y', '+Z', '-Z'].map((n) => <AxisButton key={n} label={n} />)}
      <div className="my-0.5 h-px w-4 shrink-0 bg-gray-300" />
      <AxisButton label="n̂" />
      <SideRule />
      {[
        'showBlocks', 'showDomains', 'showConnectors', 'showPoints', 'showDatabase', 'showSources',
        'showGrid', 'hideAxesRed', 'hideAxes', 'hideCube', 'hideGrid',
      ].map((n) => <SideButton key={n} name={n} />)}
    </div>
  </div>
);

const StatusBar = () => (
  <footer className="flex h-[29px] items-stretch border-t border-gray-300 bg-[#efefef] font-[Roboto,sans-serif] text-[8px] text-[#222]">
    <div className="flex items-center gap-[3px] border-r border-gray-300 pr-[3px] pb-0.5 pl-[3px]">
      <svg viewBox="0 0 12 12" className="h-3 w-3"><path d="M3.500 0.500H8.500L11.500 3.500V8.500L8.500 11.500H3.500L0.500 8.500V3.500Z" fill="#858585" stroke="#aaa" strokeWidth="0.600" /></svg>
      <div className="flex flex-col gap-[3px]">
        <div className="h-2 w-[67px] rounded-[2px] border border-gray-300 bg-white" />
        <div className="h-2 w-[67px] rounded-[2px] border border-gray-300 bg-white" />
      </div>
    </div>
    <div className="flex flex-col justify-center gap-[3px] border-r border-gray-300 pl-[5px]">
      <div className="flex items-center gap-3">
        <svg viewBox="0 0 10 10" className="h-[10px] w-[10px]">
          <rect width="10" height="10" fill="#109797" />
          <path d="M0 3H10M0 6.500H10M3 0V10M6.500 0V10" stroke="#50b8b4" strokeWidth="0.500" />
        </svg>
        <svg viewBox="0 0 10 10" className="h-[10px] w-[10px]">
          <path d="M1 3L3.500 0.500H9.500V7L7 9.500H1Z" fill="#b00d0d" />
          <path d="M1 3L3.500 0.500H9.500L7 3Z" fill="#e05a50" />
          <path d="M7 3L9.500 0.500V7L7 9.500Z" fill="#780606" />
        </svg>
        <span className="font-bold">3D</span>
      </div>
      <div className="flex gap-[3px] whitespace-nowrap"><span>OVERFLOW</span><span>PEGASUS 5</span></div>
    </div>
    <div className="w-[22px] border-r border-gray-300" />
    <div className="ml-auto flex">
      <div className="w-[76px] border-l border-gray-300" />
      <div className="w-[76px] border-l border-gray-300" />
      <div className="w-[59px] border-l border-gray-300" />
      <div className="w-[62px] border-l border-gray-300" />
    </div>
  </footer>
);

const App: React.FC = () => {
  return (
    <div className="flex h-screen flex-col overflow-hidden bg-[#efefef] font-['Open_Sans','Noto_Sans',sans-serif] leading-none">
      <TitleBar />
      <nav className="flex h-[15px] items-center gap-[10px] bg-white pl-[5px] font-[Roboto,sans-serif] text-[8px] text-[#222]">
        {menus.map((menu) => <button key={menu} type="button">{menu}</button>)}
      </nav>
      <div className="flex h-[22px] items-center border-b border-gray-300">
        <div className="ml-[3px] mr-0.5 h-[18px] border-l border-dotted border-gray-400" />
        <Tools items={fileTools} />
        <Tools items={gridTools} spaced />
        <Tools items={shapeTools} />
        <Tools items={examineTools} spaced />
      </div>
      <div className="flex h-[23px] items-center border-b border-gray-300">
        <div className="ml-[3px] mr-0.5 h-[18px] border-l border-dotted border-gray-400" />
        <Tools items={createTools} />
        <Tools items={solveTools} spaced />
        <div className="mr-[46px] ml-auto flex items-center">
          <Handle />
          <Tools items={maskTools} spaced />
        </div>
      </div>
      <div className="flex min-h-0 flex-1">
        <PanelsDock />
        <main className="ml-[3px] flex min-w-0 flex-1 flex-col">
          <Viewport />
          <MessagesDock />
        </main>
        <SideBars />
      </div>
      <StatusBar />
    </div>
  );
};

export default App;
